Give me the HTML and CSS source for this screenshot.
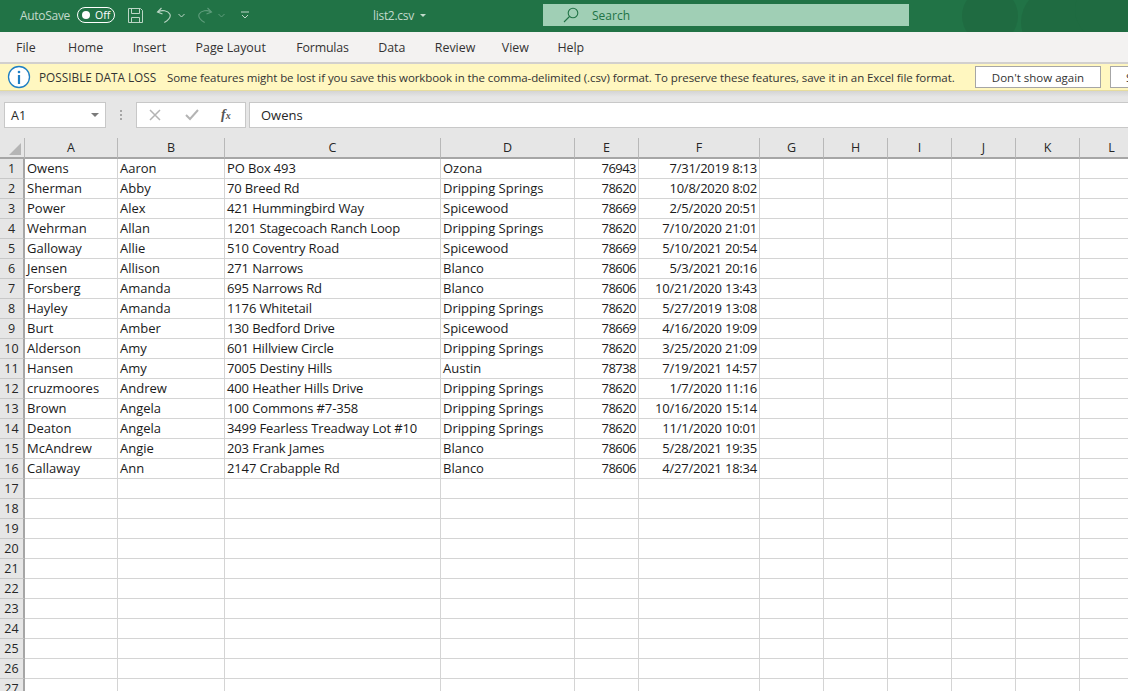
FILE: index.html
```html
<!DOCTYPE html>
<html lang="en">
<head>
<meta charset="utf-8">
<title>list2.csv - Excel</title>
<link rel="stylesheet" href="styles.css">
</head>
<body>
<header class="titlebar">
  <div class="blobs" aria-hidden="true">
    <svg width="288" height="32" viewBox="0 0 288 32"><circle cx="150" cy="16" r="28" fill="#1f6b41"/><circle cx="215" cy="22" r="34" fill="#1f6b41"/><circle cx="265" cy="10" r="30" fill="#1f6b41"/></svg>
  </div>
  <span class="autosave">AutoSave</span>
  <span class="toggle"><i class="knob"></i><span>Off</span></span>
  <svg class="qa save" width="17" height="17" viewBox="0 0 17 17" fill="none" stroke="#bcd6c6"><path d="M1.500 1.500h12l2 2v12h-14z"/><path d="M4.500 1.500v5h8v-5M4.500 15.500v-5h8v5"/></svg>
  <svg class="qa undo" width="16" height="16" viewBox="0 0 16 16" fill="none" stroke="#bcd6c6" stroke-width="1.100"><path d="M5.500 1 1.500 5l5 2"/><path d="M1.800 5c4-2.400 10-1.600 12 2 1.400 3-1 6-5.500 8.500"/></svg>
  <svg class="chev" width="7" height="5" viewBox="0 0 7 5" fill="none" stroke="#bcd6c6"><path d="m.5 1 3 3 3-3"/></svg>
  <svg class="qa redo" width="16" height="16" viewBox="0 0 16 16" fill="none" stroke="#5e9c7b" stroke-width="1.100"><path d="m10.500 1 4 4-5 2"/><path d="M14.200 5c-4-2.400-10-1.600-12 2-1.400 3 1 6 5.500 8.500"/></svg>
  <svg class="chev dim" width="7" height="5" viewBox="0 0 7 5" fill="none" stroke="#5e9c7b"><path d="m.5 1 3 3 3-3"/></svg>
  <svg class="custom" width="8" height="8" viewBox="0 0 8 8" fill="none" stroke="#bcd6c6"><path d="M0 1h8"/><path d="m1 4 3 3 3-3"/></svg>
  <span class="filename">list2.csv</span>
  <i class="caret"></i>
  <div class="search">
    <svg width="16" height="16" viewBox="0 0 16 16" fill="none" stroke="#217346" stroke-width="1.100"><circle cx="10" cy="6" r="4.800"/><path d="M6.500 9.500 1 15"/></svg>
    <span>Search</span>
  </div>
</header>

<nav class="tabs">
  <span class="tab t-file">File</span>
  <span class="tab">Home</span>
  <span class="tab">Insert</span>
  <span class="tab t-layout">Page Layout</span>
  <span class="tab t-formulas">Formulas</span>
  <span class="tab">Data</span>
  <span class="tab">Review</span>
  <span class="tab t-view">View</span>
  <span class="tab t-help">Help</span>
</nav>

<section class="msgbar">
  <svg class="info" width="24" height="24" viewBox="0 0 24 24"><circle cx="12" cy="12" r="10.500" fill="#fff" stroke="#1f7fc4" stroke-width="1.300"/><circle cx="12" cy="7" r="1.300" fill="#1f7fc4"/><path d="M10.900 10h2.200v9h-2.200z" fill="#1f7fc4"/></svg>
  <strong class="msgtitle">POSSIBLE DATA LOSS</strong>
  <span class="msgtext">Some features might be lost if you save this workbook in the comma-delimited (.csv) format. To preserve these features, save it in an Excel file format.</span>
  <span class="msgbtn">Don't show again</span>
  <span class="msgbtn second">Save As...</span>
</section>

<section class="fbar">
  <div class="namebox"><span>A1</span><i class="caret grey"></i></div>
  <div class="vdots"><i></i><i></i><i></i></div>
  <div class="fbtns">
    <svg width="12" height="12" viewBox="0 0 12 12" stroke="#b4b4b4" stroke-width="1.500" fill="none"><path d="m1 1 10 10M11 1 1 11"/></svg>
    <svg class="check" width="14" height="12" viewBox="0 0 14 12" stroke="#b4b4b4" stroke-width="2" fill="none"><path d="m1 6 4 4 8-9"/></svg>
    <em class="fx">f<small>x</small></em>
  </div>
  <div class="finput">Owens</div>
</section>

<main class="sheet">
<table>
<colgroup><col class="c-rh"><col class="c-a"><col class="c-b"><col class="c-c"><col class="c-d"><col class="c-e"><col class="c-f"><col class="c-n"><col class="c-n"><col class="c-n"><col class="c-n"><col class="c-n"><col class="c-n"></colgroup>
<thead><tr><th class="corner"><svg width="24" height="19" viewBox="0 0 24 19"><path d="M21 5v12H9z" fill="#b5b5b5"/></svg></th><th>A</th><th>B</th><th>C</th><th>D</th><th>E</th><th>F</th><th>G</th><th>H</th><th>I</th><th>J</th><th>K</th><th>L</th></tr></thead>
<tbody>
<tr><th>1</th><td>Owens</td><td>Aaron</td><td class="addr">PO Box 493</td><td>Ozona</td><td class="zip">76943</td><td class="date">7/31/2019 8:13</td><td></td><td></td><td></td><td></td><td></td><td></td></tr>
<tr><th>2</th><td>Sherman</td><td>Abby</td><td class="addr">70 Breed Rd</td><td>Dripping Springs</td><td class="zip">78620</td><td class="date">10/8/2020 8:02</td><td></td><td></td><td></td><td></td><td></td><td></td></tr>
<tr><th>3</th><td>Power</td><td>Alex</td><td class="addr">421 Hummingbird Way</td><td>Spicewood</td><td class="zip">78669</td><td class="date">2/5/2020 20:51</td><td></td><td></td><td></td><td></td><td></td><td></td></tr>
<tr><th>4</th><td>Wehrman</td><td>Allan</td><td class="addr">1201 Stagecoach Ranch Loop</td><td>Dripping Springs</td><td class="zip">78620</td><td class="date">7/10/2020 21:01</td><td></td><td></td><td></td><td></td><td></td><td></td></tr>
<tr><th>5</th><td>Galloway</td><td>Allie</td><td class="addr">510 Coventry Road</td><td>Spicewood</td><td class="zip">78669</td><td class="date">5/10/2021 20:54</td><td></td><td></td><td></td><td></td><td></td><td></td></tr>
<tr><th>6</th><td>Jensen</td><td>Allison</td><td class="addr">271 Narrows</td><td>Blanco</td><td class="zip">78606</td><td class="date">5/3/2021 20:16</td><td></td><td></td><td></td><td></td><td></td><td></td></tr>
<tr><th>7</th><td>Forsberg</td><td>Amanda</td><td class="addr">695 Narrows Rd</td><td>Blanco</td><td class="zip">78606</td><td class="date">10/21/2020 13:43</td><td></td><td></td><td></td><td></td><td></td><td></td></tr>
<tr><th>8</th><td>Hayley</td><td>Amanda</td><td class="addr">1176 Whitetail</td><td>Dripping Springs</td><td class="zip">78620</td><td class="date">5/27/2019 13:08</td><td></td><td></td><td></td><td></td><td></td><td></td></tr>
<tr><th>9</th><td>Burt</td><td>Amber</td><td class="addr">130 Bedford Drive</td><td>Spicewood</td><td class="zip">78669</td><td class="date">4/16/2020 19:09</td><td></td><td></td><td></td><td></td><td></td><td></td></tr>
<tr><th>10</th><td>Alderson</td><td>Amy</td><td class="addr">601 Hillview Circle</td><td>Dripping Springs</td><td class="zip">78620</td><td class="date">3/25/2020 21:09</td><td></td><td></td><td></td><td></td><td></td><td></td></tr>
<tr><th>11</th><td>Hansen</td><td>Amy</td><td class="addr">7005 Destiny Hills</td><td>Austin</td><td class="zip">78738</td><td class="date">7/19/2021 14:57</td><td></td><td></td><td></td><td></td><td></td><td></td></tr>
<tr><th>12</th><td>cruzmoores</td><td>Andrew</td><td class="addr">400 Heather Hills Drive</td><td>Dripping Springs</td><td class="zip">78620</td><td class="date">1/7/2020 11:16</td><td></td><td></td><td></td><td></td><td></td><td></td></tr>
<tr><th>13</th><td>Brown</td><td>Angela</td><td class="addr">100 Commons #7-358</td><td>Dripping Springs</td><td class="zip">78620</td><td class="date">10/16/2020 15:14</td><td></td><td></td><td></td><td></td><td></td><td></td></tr>
<tr><th>14</th><td>Deaton</td><td>Angela</td><td class="addr">3499 Fearless Treadway Lot #10</td><td>Dripping Springs</td><td class="zip">78620</td><td class="date">11/1/2020 10:01</td><td></td><td></td><td></td><td></td><td></td><td></td></tr>
<tr><th>15</th><td>McAndrew</td><td>Angie</td><td class="addr">203 Frank James</td><td>Blanco</td><td class="zip">78606</td><td class="date">5/28/2021 19:35</td><td></td><td></td><td></td><td></td><td></td><td></td></tr>
<tr><th>16</th><td>Callaway</td><td>Ann</td><td class="addr">2147 Crabapple Rd</td><td>Blanco</td><td class="zip">78606</td><td class="date">4/27/2021 18:34</td><td></td><td></td><td></td><td></td><td></td><td></td></tr>
<tr><th>17</th><td></td><td></td><td></td><td></td><td></td><td></td><td></td><td></td><td></td><td></td><td></td><td></td></tr>
<tr><th>18</th><td></td><td></td><td></td><td></td><td></td><td></td><td></td><td></td><td></td><td></td><td></td><td></td></tr>
<tr><th>19</th><td></td><td></td><td></td><td></td><td></td><td></td><td></td><td></td><td></td><td></td><td></td><td></td></tr>
<tr><th>20</th><td></td><td></td><td></td><td></td><td></td><td></td><td></td><td></td><td></td><td></td><td></td><td></td></tr>
<tr><th>21</th><td></td><td></td><td></td><td></td><td></td><td></td><td></td><td></td><td></td><td></td><td></td><td></td></tr>
<tr><th>22</th><td></td><td></td><td></td><td></td><td></td><td></td><td></td><td></td><td></td><td></td><td></td><td></td></tr>
<tr><th>23</th><td></td><td></td><td></td><td></td><td></td><td></td><td></td><td></td><td></td><td></td><td></td><td></td></tr>
<tr><th>24</th><td></td><td></td><td></td><td></td><td></td><td></td><td></td><td></td><td></td><td></td><td></td><td></td></tr>
<tr><th>25</th><td></td><td></td><td></td><td></td><td></td><td></td><td></td><td></td><td></td><td></td><td></td><td></td></tr>
<tr><th>26</th><td></td><td></td><td></td><td></td><td></td><td></td><td></td><td></td><td></td><td></td><td></td><td></td></tr>
<tr><th>27</th><td></td><td></td><td></td><td></td><td></td><td></td><td></td><td></td><td></td><td></td><td></td><td></td></tr>
</tbody>
</table>
</main>
</body>
</html>
```
FILE: styles.css
```css
* { box-sizing: border-box; }
html, body { margin: 0; height: 100%; overflow: hidden; background: #fff; }
body { width: 1128px; height: 691px; font-family: "Open Sans", "Noto Sans", sans-serif; color: #262626; }

.titlebar { position: relative; height: 32px; padding-bottom: 2px; background: #217346; display: flex; align-items: center; color: #c3dacc; font-size: 12px; overflow: hidden; }
.blobs { position: absolute; right: 0; top: 0; line-height: 0; }
.autosave { margin-left: 20px; width: 51px; letter-spacing: -.3px; }
.toggle { margin-left: 6px; width: 38px; height: 16px; border: 1px solid #fff; border-radius: 8px; display: flex; align-items: center; color: #fff; font-size: 10.500px; }
.knob { width: 8px; height: 8px; border-radius: 50%; background: #fff; margin: 0 5px 0 4px; }
.save { margin-left: 12px; }
.undo { margin-left: 12px; }
.chev { margin-left: 6px; }
.redo { margin-left: 12px; }
.chev.dim { margin-left: 5px; }
.custom { margin-left: 16px; }
.filename { margin-left: 124px; width: 47px; font-size: 12px; letter-spacing: -.3px; }
.caret { display: block; width: 0; height: 0; border: 3px solid transparent; border-top: 3px solid #c3dacc; border-bottom: 0; }
.search { position: relative; margin-left: 117px; width: 366px; height: 22px; background: #a0cfb5; display: flex; align-items: center; color: #217346; padding-left: 20px; gap: 13px; font-size: 12px; }

.tabs { height: 32px; background: #f3f2f1; border-bottom: 2px solid #d2d0ce; display: flex; align-items: center; gap: 29.500px; padding-left: 16px; font-size: 12.400px; color: #333; }
.t-file { margin-right: 3px; }
.t-layout { margin-right: 1px; }
.t-formulas { letter-spacing: -.2px; }
.t-view { margin-left: -3px; }
.t-help { margin-left: -1px; }

.msgbar { height: 27px; background: #fff7c0; border-bottom: 1px solid #e6dc9e; display: flex; align-items: center; padding-left: 7px; font-size: 11.500px; color: #333; overflow: hidden; white-space: nowrap; }
.info { flex: none; }
.msgtitle { font-weight: 400; margin-left: 8px; width: 118px; flex: none; font-size: 11.800px; }
.msgtext { margin-left: 10px; width: 788px; flex: none; letter-spacing: -.08px; }
.msgbtn { flex: none; margin-left: 20px; width: 126px; height: 22px; background: #fff; border: 1px solid #a6a6a6; display: flex; align-items: center; justify-content: center; }
.msgbtn.second { margin-left: 9px; width: 90px; justify-content: flex-start; padding-left: 15px; }

.fbar { height: 47px; padding: 11px 0 10px 4px; background: linear-gradient(#d4d4d4, #e6e6e6 6px); display: flex; align-items: stretch; }
.namebox { width: 102px; background: #fff; border: 1px solid #c8c8c8; display: flex; align-items: center; justify-content: space-between; padding: 0 6px 0 6px; font-size: 12.500px; }
.caret.grey { border-width: 4px 4px 0; border-top-color: #7a7a7a; }
.vdots { width: 30px; display: flex; flex-direction: column; align-items: center; justify-content: center; gap: 2px; }
.vdots i { width: 2px; height: 2px; background: #a6a6a6; }
.fbtns { width: 110px; background: #fff; border: 1px solid #c8c8c8; display: flex; align-items: center; padding-left: 12px; }
.check { margin-left: 24px; }
.fx { margin-left: 22px; font-family: "Liberation Serif", serif; font-size: 14px; color: #555; font-weight: 700; }
.fx small { font-size: 10px; }
.finput { margin-left: 3px; flex: 1; background: #fff; border: 1px solid #c8c8c8; border-right: 0; display: flex; align-items: center; padding-left: 11px; font-size: 13px; }

.sheet { height: 553px; background: #e6e6e6; overflow: hidden; }
table { border-collapse: separate; border-spacing: 0; table-layout: fixed; width: 1144px; background: #fff; }
.c-rh { width: 25px; } .c-a { width: 93px; } .c-b { width: 107px; } .c-c { width: 216px; } .c-d { width: 134px; } .c-e { width: 64px; } .c-f { width: 121px; } .c-n { width: 64px; }
thead th { height: 20px; padding: 0; background: #e6e6e6; border-right: 1px solid #b8b8b8; border-bottom: 2px solid #a6a6a6; font-weight: 400; font-size: 12.500px; color: #262626; }
.corner { line-height: 0; text-align: left; }
tbody th { padding: 0; background: #e6e6e6; border-right: 2px solid #a6a6a6; border-bottom: 1px solid #c8c8c8; font-weight: 400; font-size: 12.500px; text-align: center; color: #262626; }
td { height: 20px; padding: 0 2px 1px; border-right: 1px solid #d4d4d4; border-bottom: 1px solid #d4d4d4; font-size: 13px; line-height: 17px; white-space: nowrap; overflow: hidden; color: #1a1a1a; }
td.addr { letter-spacing: -.13px; }
td.zip { text-align: right; letter-spacing: -.55px; }
td.date { text-align: right; letter-spacing: -.22px; }
```
